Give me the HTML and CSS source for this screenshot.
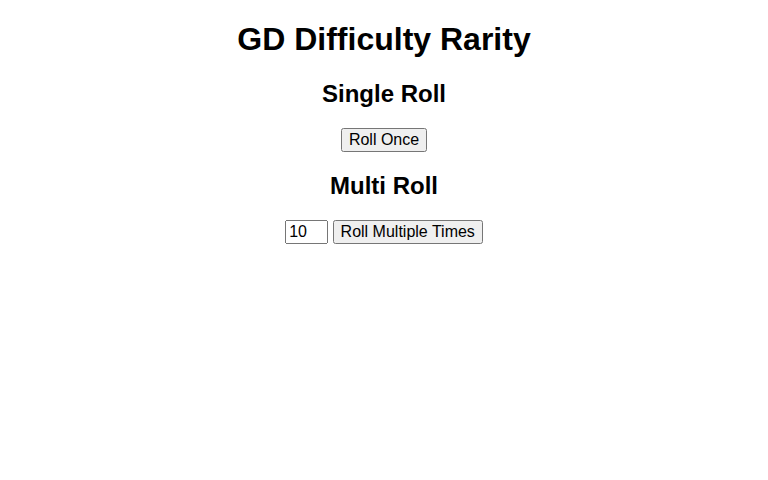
FILE: index.html
```html
<!DOCTYPE html>
<html>

<head>
    <meta charset="UTF-8">
    <title>GD Difficulty Rarity</title>
    <link rel="stylesheet" href="styles.css">
</head>

<body>
    <div class="page">
        <h1>GD Difficulty Rarity</h1>

        <h2>Single Roll</h2>
        <div class="row">
            <button class="rollBtn" id="rollOnce">Roll Once</button>
        </div>

        <h2>Multi Roll</h2>
        <div class="row">
            <input class="countBox" type="number" id="count" value="10" min="1">
            <button class="rollBtn" id="rollMulti">Roll Multiple Times</button>
        </div>

        <div class="results" id="results"></div>
    </div>
</body>

</html>
```

FILE: styles.css
```css
body {
    margin: 0;
    font-family: "Liberation Sans", Arial, sans-serif;
}

.page {
    text-align: center;
}

.row {
    font-size: 16px;
}

.rollBtn {
    font-family: "Liberation Sans", Arial, sans-serif;
    font-size: 16px;
}

.countBox {
    font-family: "Liberation Sans", Arial, sans-serif;
    font-size: 16px;
    width: 35px;
}
```
